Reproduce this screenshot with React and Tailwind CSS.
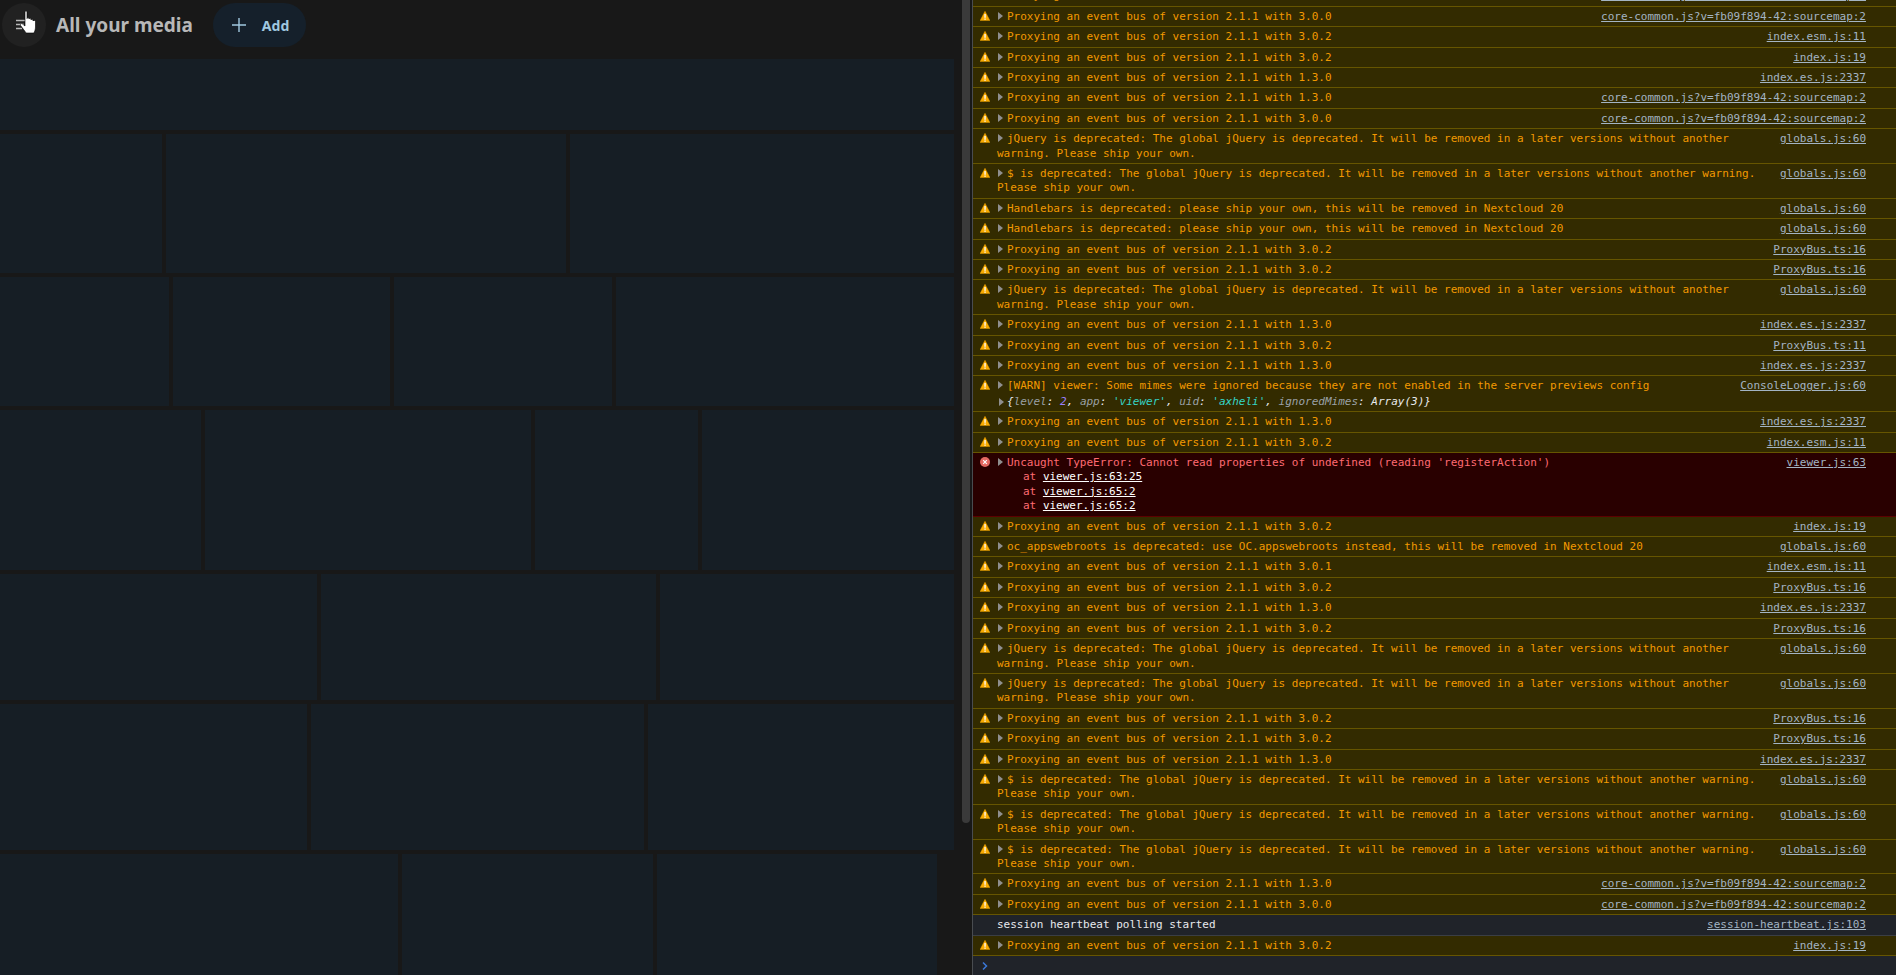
import React from 'react';

const CORE = 'core-common.js?v=fb09f894-42:sourcemap:2';
const JQ = 'jQuery is deprecated: The global jQuery is deprecated. It will be removed in a later versions without another warning. Please ship your own.';
const DOLLAR = '$ is deprecated: The global jQuery is deprecated. It will be removed in a later versions without another warning. Please ship your own.';
const HB = 'Handlebars is deprecated: please ship your own, this will be removed in Nextcloud 20';

const bus = (v) => `Proxying an event bus of version 2.1.1 with ${v}`;

const logs = [
  { text: bus('3.0.2'), src: CORE },
  { text: bus('3.0.0'), src: CORE },
  { text: bus('3.0.2'), src: 'index.esm.js:11' },
  { text: bus('3.0.2'), src: 'index.js:19' },
  { text: bus('1.3.0'), src: 'index.es.js:2337' },
  { text: bus('1.3.0'), src: CORE },
  { text: bus('3.0.0'), src: CORE },
  { text: JQ, src: 'globals.js:60' },
  { text: DOLLAR, src: 'globals.js:60' },
  { text: HB, src: 'globals.js:60' },
  { text: HB, src: 'globals.js:60' },
  { text: bus('3.0.2'), src: 'ProxyBus.ts:16' },
  { text: bus('3.0.2'), src: 'ProxyBus.ts:16' },
  { text: JQ, src: 'globals.js:60' },
  { text: bus('1.3.0'), src: 'index.es.js:2337' },
  { text: bus('3.0.2'), src: 'ProxyBus.ts:11' },
  { text: bus('1.3.0'), src: 'index.es.js:2337' },
  { type: 'object', text: '[WARN] viewer: Some mimes were ignored because they are not enabled in the server previews config', src: 'ConsoleLogger.js:60' },
  { text: bus('1.3.0'), src: 'index.es.js:2337' },
  { text: bus('3.0.2'), src: 'index.esm.js:11' },
  { type: 'error', text: "Uncaught TypeError: Cannot read properties of undefined (reading 'registerAction')", src: 'viewer.js:63' },
  { text: bus('3.0.2'), src: 'index.js:19' },
  { text: 'oc_appswebroots is deprecated: use OC.appswebroots instead, this will be removed in Nextcloud 20', src: 'globals.js:60' },
  { text: bus('3.0.1'), src: 'index.esm.js:11' },
  { text: bus('3.0.2'), src: 'ProxyBus.ts:16' },
  { text: bus('1.3.0'), src: 'index.es.js:2337' },
  { text: bus('3.0.2'), src: 'ProxyBus.ts:16' },
  { text: JQ, src: 'globals.js:60' },
  { text: JQ, src: 'globals.js:60' },
  { text: bus('3.0.2'), src: 'ProxyBus.ts:16' },
  { text: bus('3.0.2'), src: 'ProxyBus.ts:16' },
  { text: bus('1.3.0'), src: 'index.es.js:2337' },
  { text: DOLLAR, src: 'globals.js:60' },
  { text: DOLLAR, src: 'globals.js:60' },
  { text: DOLLAR, src: 'globals.js:60' },
  { text: bus('1.3.0'), src: CORE },
  { text: bus('3.0.0'), src: CORE },
  { type: 'info', text: 'session heartbeat polling started', src: 'session-heartbeat.js:103' },
  { text: bus('3.0.2'), src: 'index.js:19' },
];

const tileRows = [
  { height: 'h-[71px]', tiles: ['w-[954px]'] },
  { height: 'h-[139px]', tiles: ['w-[162px]', 'w-[400px]', 'w-[384px]'] },
  { height: 'h-[129px]', tiles: ['w-[169px]', 'w-[217px]', 'w-[218px]', 'w-[338px]'] },
  { height: 'h-[160px]', tiles: ['w-[201px]', 'w-[326px]', 'w-[163px]', 'w-[252px]'] },
  { height: 'h-[126px]', tiles: ['w-[317px]', 'w-[335px]', 'w-[294px]'] },
  { height: 'h-[146px]', tiles: ['w-[307px]', 'w-[333px]', 'w-[306px]'] },
  { height: 'h-[125px]', tiles: ['w-[398px]', 'w-[251px]', 'w-[280px]'] },
];

function WarnIcon() {
  return (
    <svg width="10" height="10" viewBox="0 0 10 10" className="shrink-0">
      <path d="M5 0.2 L9.9 9.6 L0.1 9.6 Z" fill="#f9ab00" stroke="#f9ab00" strokeWidth="0.4" strokeLinejoin="round" />
      <rect x="4.4" y="3" width="1.3" height="3.8" fill="#fff" />
      <rect x="4.4" y="7.5" width="1.3" height="1.3" fill="#fff" />
    </svg>
  );
}

function ErrorIcon() {
  return (
    <svg width="10" height="10" viewBox="0 0 10 10" className="shrink-0">
      <circle cx="5" cy="5" r="5" fill="#e46962" />
      <path d="M3.2 3.2 L6.8 6.8 M6.8 3.2 L3.2 6.8" stroke="#fff" strokeWidth="1.2" />
    </svg>
  );
}

function Arrow() {
  return (
    <svg width="5" height="8" viewBox="0 0 5 8" className="shrink-0">
      <path d="M0 0 L5 4 L0 8 Z" fill="#8f8f8f" />
    </svg>
  );
}

function LogRow({ log }) {
  const isError = log.type === 'error';
  const isInfo = log.type === 'info';
  let rowColor = 'bg-[#332b00] border-[#665500] text-[#f29900]';
  if (isError) rowColor = 'bg-[#290000] border-[#5c0000] text-[#ff6b72]';
  if (isInfo) rowColor = 'bg-[#202329] border-[#3a3e44] text-[#e8eaed]';

  return (
    <div className={`flex border-b pt-[3px] pb-[2px] leading-[14.4px] ${rowColor}`}>
      <div className="w-[24px] shrink-0 pl-[7px] pt-[1px]">
        {isError ? <ErrorIcon /> : isInfo ? null : <WarnIcon />}
      </div>
      <div className="min-w-0 flex-1 pr-[30px]">
        <span className="float-right ml-[20px] text-[#a3b4c4] underline">{log.src}</span>
        {!isInfo && (
          <span className="mr-[2px] inline-flex w-[8px] pl-[1px]">
            <Arrow />
          </span>
        )}
        {log.text}
        {log.type === 'object' && (
          <div className="mt-[1px] flex items-center gap-[3px] pl-[2px] italic text-[#e8eaed]">
            <Arrow />
            <span>
              {'{'}
              <span className="text-[#9aa0a6]">level</span>: <span className="text-[#9980ff]">2</span>,{' '}
              <span className="text-[#9aa0a6]">app</span>: <span className="text-[#35d4c7]">'viewer'</span>,{' '}
              <span className="text-[#9aa0a6]">uid</span>: <span className="text-[#35d4c7]">'axheli'</span>,{' '}
              <span className="text-[#9aa0a6]">ignoredMimes</span>: Array(3){'}'}
            </span>
          </div>
        )}
        {isError && (
          <div className="pl-[26px]">
            {['viewer.js:63:25', 'viewer.js:65:2', 'viewer.js:65:2'].map((loc, i) => (
              <div key={i}>
                at <span className="text-white underline">{loc}</span>
              </div>
            ))}
          </div>
        )}
      </div>
    </div>
  );
}

export default function App() {
  return (
    <div className="flex h-screen w-full overflow-hidden bg-[#181818]">
      <div className="relative flex h-full w-[972px] shrink-0">
        <div className="w-[962px] shrink-0">
          <header className="flex h-[59px] items-start pt-[3px]">
            <button className="ml-[2px] flex h-[44px] w-[44px] items-center justify-center rounded-full bg-[#212121]">
              <svg width="12" height="12" viewBox="0 0 12 12" className="mr-[4px] text-[#b8b8b8]">
                <path d="M0 1.5 H9 M0 5.5 H8 M0 9.5 H6" stroke="currentColor" strokeWidth="1.4" />
              </svg>
            </button>
            <h1 className="ml-[10px] mt-[8px] font-['Noto_Sans',sans-serif] text-[19px] leading-[28px] font-bold text-[#b8b8b8]">
              All your media
            </h1>
            <button className="ml-[20px] flex h-[44px] w-[93px] items-center rounded-full bg-[#15202b] pl-[19px]">
              <svg width="14" height="14" viewBox="0 0 14 14">
                <path d="M7 0 V14 M0 7 H14" stroke="#a0c8e0" strokeWidth="1.4" />
              </svg>
              <span className="ml-[16px] font-['Noto_Sans',sans-serif] text-[14px] font-bold text-[#a0c8e0]">Add</span>
            </button>
          </header>
          <div className="flex flex-col gap-1">
            {tileRows.map((row, i) => (
              <div key={i} className={`flex gap-1 ${row.height}`}>
                {row.tiles.map((w, j) => (
                  <div key={j} className={`${w} h-full bg-[#161e25]`} />
                ))}
              </div>
            ))}
          </div>
        </div>
        <div className="h-[823px] w-[8px] shrink-0 rounded-b-[4px] bg-[#3a3a3a]" />
        {/* mouse pointer caught in the screenshot */}
        <svg width="16" height="23" viewBox="0 0 16 23" className="absolute left-[20px] top-[11px]">
          <path
            d="M5 1 C5 -0.2 7 -0.2 7 1 V7.5 C7 6.5 9 6.5 9 7.5 V8 C9 7 11 7 11 8 V9 C11 8 13 8 13 9 V10 C13 9.2 15.5 9.2 15.5 10.5 V16 C15.5 19 14.5 20 14 22 H6 C5 20 3 18 0.6 14.5 C0 13 1.5 12 2.5 13 L5 15 Z"
            fill="#fff"
            stroke="#000"
            strokeWidth="0.6"
          />
        </svg>
      </div>
      <div className="flex h-full min-w-0 flex-1 flex-col justify-end border-l border-[#494c50] bg-[#202329] font-['DejaVu_Sans_Mono',monospace] text-[11px]">
        {logs.map((log, i) => (
          <LogRow key={i} log={log} />
        ))}
        <div className="flex h-[19px] shrink-0 items-center pl-[7px]">
          <svg width="8" height="10" viewBox="0 0 8 10" className="ml-[1px]">
            <path d="M2 1.5 L5.5 5 L2 8.5" fill="none" stroke="#3b78d8" strokeWidth="1.5" />
          </svg>
        </div>
      </div>
    </div>
  );
}
